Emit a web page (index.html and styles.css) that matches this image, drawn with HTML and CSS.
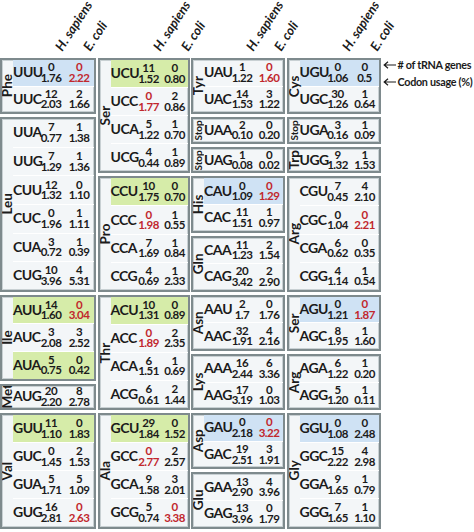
FILE: index.html
```html
<!DOCTYPE html>
<html>
<head>
<meta charset="utf-8">
<link rel="stylesheet" href="styles.css">
</head>
<body>
<div class="page">
  <div class="main">
    <div class="head">
      <div class="hcol"><span class="hs">H. sapiens</span><span class="ec">E. coli</span></div>
      <div class="hcol"><span class="hs">H. sapiens</span><span class="ec">E. coli</span></div>
      <div class="hcol"><span class="hs">H. sapiens</span><span class="ec">E. coli</span></div>
      <div class="hcol"><span class="hs">H. sapiens</span><span class="ec">E. coli</span></div>
    </div>
    <div class="table">
      <!-- column 1 -->
      <div class="box s2"><div class="aa">Phe</div><div class="rows">
        <div class="row blue"><span class="cod">UUU</span><span class="n"><span>0</span><span>1.76</span></span><span class="n r"><span>0</span><span>2.22</span></span></div>
        <div class="row"><span class="cod">UUC</span><span class="n"><span>12</span><span>2.03</span></span><span class="n"><span>2</span><span>1.66</span></span></div>
      </div></div>
      <div class="box s6"><div class="aa">Leu</div><div class="rows">
        <div class="row"><span class="cod">UUA</span><span class="n"><span>7</span><span>0.77</span></span><span class="n"><span>1</span><span>1.38</span></span></div>
        <div class="row"><span class="cod">UUG</span><span class="n"><span>7</span><span>1.29</span></span><span class="n"><span>1</span><span>1.36</span></span></div>
        <div class="row"><span class="cod">CUU</span><span class="n"><span>12</span><span>1.32</span></span><span class="n"><span>0</span><span>1.10</span></span></div>
        <div class="row"><span class="cod">CUC</span><span class="n"><span>0</span><span>1.96</span></span><span class="n"><span>1</span><span>1.11</span></span></div>
        <div class="row"><span class="cod">CUA</span><span class="n"><span>3</span><span>0.72</span></span><span class="n"><span>1</span><span>0.39</span></span></div>
        <div class="row"><span class="cod">CUG</span><span class="n"><span>10</span><span>3.96</span></span><span class="n"><span>4</span><span>5.31</span></span></div>
      </div></div>
      <div class="box s3"><div class="aa">Ile</div><div class="rows">
        <div class="row green"><span class="cod">AUU</span><span class="n"><span>14</span><span>1.60</span></span><span class="n r"><span>0</span><span>3.04</span></span></div>
        <div class="row"><span class="cod">AUC</span><span class="n"><span>3</span><span>2.08</span></span><span class="n"><span>3</span><span>2.52</span></span></div>
        <div class="row green"><span class="cod">AUA</span><span class="n"><span>5</span><span>0.75</span></span><span class="n"><span>0</span><span>0.42</span></span></div>
      </div></div>
      <div class="box s1"><div class="aa">Met</div><div class="rows">
        <div class="row"><span class="cod">AUG</span><span class="n"><span>20</span><span>2.20</span></span><span class="n"><span>8</span><span>2.78</span></span></div>
      </div></div>
      <div class="box s4"><div class="aa">Val</div><div class="rows">
        <div class="row green"><span class="cod">GUU</span><span class="n"><span>11</span><span>1.10</span></span><span class="n"><span>0</span><span>1.83</span></span></div>
        <div class="row"><span class="cod">GUC</span><span class="n"><span>0</span><span>1.45</span></span><span class="n"><span>2</span><span>1.53</span></span></div>
        <div class="row"><span class="cod">GUA</span><span class="n"><span>5</span><span>1.71</span></span><span class="n"><span>5</span><span>1.09</span></span></div>
        <div class="row"><span class="cod">GUG</span><span class="n"><span>16</span><span>2.81</span></span><span class="n r"><span>0</span><span>2.63</span></span></div>
      </div></div>

      <!-- column 2 -->
      <div class="box s4"><div class="aa">Ser</div><div class="rows">
        <div class="row green"><span class="cod">UCU</span><span class="n"><span>11</span><span>1.52</span></span><span class="n"><span>0</span><span>0.80</span></span></div>
        <div class="row"><span class="cod">UCC</span><span class="n r"><span>0</span><span>1.77</span></span><span class="n"><span>2</span><span>0.86</span></span></div>
        <div class="row"><span class="cod">UCA</span><span class="n"><span>5</span><span>1.22</span></span><span class="n"><span>1</span><span>0.70</span></span></div>
        <div class="row"><span class="cod">UCG</span><span class="n"><span>4</span><span>0.44</span></span><span class="n"><span>1</span><span>0.89</span></span></div>
      </div></div>
      <div class="box s4"><div class="aa">Pro</div><div class="rows">
        <div class="row green"><span class="cod">CCU</span><span class="n"><span>10</span><span>1.75</span></span><span class="n"><span>0</span><span>0.70</span></span></div>
        <div class="row"><span class="cod">CCC</span><span class="n r"><span>0</span><span>1.98</span></span><span class="n"><span>1</span><span>0.55</span></span></div>
        <div class="row"><span class="cod">CCA</span><span class="n"><span>7</span><span>1.69</span></span><span class="n"><span>1</span><span>0.84</span></span></div>
        <div class="row"><span class="cod">CCG</span><span class="n"><span>4</span><span>0.69</span></span><span class="n"><span>1</span><span>2.33</span></span></div>
      </div></div>
      <div class="box s4"><div class="aa">Thr</div><div class="rows">
        <div class="row green"><span class="cod">ACU</span><span class="n"><span>10</span><span>1.31</span></span><span class="n"><span>0</span><span>0.89</span></span></div>
        <div class="row"><span class="cod">ACC</span><span class="n r"><span>0</span><span>1.89</span></span><span class="n"><span>2</span><span>2.35</span></span></div>
        <div class="row"><span class="cod">ACA</span><span class="n"><span>6</span><span>1.51</span></span><span class="n"><span>1</span><span>0.69</span></span></div>
        <div class="row"><span class="cod">ACG</span><span class="n"><span>6</span><span>0.61</span></span><span class="n"><span>2</span><span>1.44</span></span></div>
      </div></div>
      <div class="box s4"><div class="aa">Ala</div><div class="rows">
        <div class="row green"><span class="cod">GCU</span><span class="n"><span>29</span><span>1.84</span></span><span class="n"><span>0</span><span>1.52</span></span></div>
        <div class="row"><span class="cod">GCC</span><span class="n r"><span>0</span><span>2.77</span></span><span class="n"><span>2</span><span>2.57</span></span></div>
        <div class="row"><span class="cod">GCA</span><span class="n"><span>9</span><span>1.58</span></span><span class="n"><span>3</span><span>2.01</span></span></div>
        <div class="row"><span class="cod">GCG</span><span class="n"><span>5</span><span>0.74</span></span><span class="n r"><span>0</span><span>3.38</span></span></div>
      </div></div>

      <!-- column 3 -->
      <div class="box s2"><div class="aa">Tyr</div><div class="rows">
        <div class="row"><span class="cod">UAU</span><span class="n"><span>1</span><span>1.22</span></span><span class="n r"><span>0</span><span>1.60</span></span></div>
        <div class="row"><span class="cod">UAC</span><span class="n"><span>14</span><span>1.53</span></span><span class="n"><span>3</span><span>1.22</span></span></div>
      </div></div>
      <div class="box s1"><div class="aa small">Stop</div><div class="rows">
        <div class="row"><span class="cod">UAA</span><span class="n"><span>2</span><span>0.10</span></span><span class="n"><span>0</span><span>0.20</span></span></div>
      </div></div>
      <div class="box s1"><div class="aa small">Stop</div><div class="rows">
        <div class="row"><span class="cod">UAG</span><span class="n"><span>1</span><span>0.08</span></span><span class="n"><span>0</span><span>0.02</span></span></div>
      </div></div>
      <div class="box s2"><div class="aa">His</div><div class="rows">
        <div class="row blue"><span class="cod">CAU</span><span class="n"><span>0</span><span>1.09</span></span><span class="n r"><span>0</span><span>1.29</span></span></div>
        <div class="row"><span class="cod">CAC</span><span class="n"><span>11</span><span>1.51</span></span><span class="n"><span>1</span><span>0.97</span></span></div>
      </div></div>
      <div class="box s2"><div class="aa">Gln</div><div class="rows">
        <div class="row"><span class="cod">CAA</span><span class="n"><span>11</span><span>1.23</span></span><span class="n"><span>2</span><span>1.54</span></span></div>
        <div class="row"><span class="cod">CAG</span><span class="n"><span>20</span><span>3.42</span></span><span class="n"><span>2</span><span>2.90</span></span></div>
      </div></div>
      <div class="box s2"><div class="aa">Asn</div><div class="rows">
        <div class="row"><span class="cod">AAU</span><span class="n"><span>2</span><span>1.7</span></span><span class="n"><span>0</span><span>1.76</span></span></div>
        <div class="row"><span class="cod">AAC</span><span class="n"><span>32</span><span>1.91</span></span><span class="n"><span>4</span><span>2.16</span></span></div>
      </div></div>
      <div class="box s2"><div class="aa">Lys</div><div class="rows">
        <div class="row"><span class="cod">AAA</span><span class="n"><span>16</span><span>2.44</span></span><span class="n"><span>6</span><span>3.36</span></span></div>
        <div class="row"><span class="cod">AAG</span><span class="n"><span>17</span><span>3.19</span></span><span class="n"><span>0</span><span>1.03</span></span></div>
      </div></div>
      <div class="box s2"><div class="aa">Asp</div><div class="rows">
        <div class="row blue"><span class="cod">GAU</span><span class="n"><span>0</span><span>2.18</span></span><span class="n r"><span>0</span><span>3.22</span></span></div>
        <div class="row"><span class="cod">GAC</span><span class="n"><span>19</span><span>2.51</span></span><span class="n"><span>3</span><span>1.91</span></span></div>
      </div></div>
      <div class="box s2"><div class="aa">Glu</div><div class="rows">
        <div class="row"><span class="cod">GAA</span><span class="n"><span>13</span><span>2.90</span></span><span class="n"><span>4</span><span>3.96</span></span></div>
        <div class="row"><span class="cod">GAG</span><span class="n"><span>13</span><span>3.96</span></span><span class="n"><span>0</span><span>1.79</span></span></div>
      </div></div>

      <!-- column 4 -->
      <div class="box s2"><div class="aa">Cys</div><div class="rows">
        <div class="row blue"><span class="cod">UGU</span><span class="n"><span>0</span><span>1.06</span></span><span class="n"><span>0</span><span>0.5</span></span></div>
        <div class="row"><span class="cod">UGC</span><span class="n"><span>30</span><span>1.26</span></span><span class="n"><span>1</span><span>0.64</span></span></div>
      </div></div>
      <div class="box s1"><div class="aa small">Stop</div><div class="rows">
        <div class="row"><span class="cod">UGA</span><span class="n"><span>3</span><span>0.16</span></span><span class="n"><span>1</span><span>0.09</span></span></div>
      </div></div>
      <div class="box s1"><div class="aa">Trp</div><div class="rows">
        <div class="row"><span class="cod">UGG</span><span class="n"><span>9</span><span>1.32</span></span><span class="n"><span>1</span><span>1.53</span></span></div>
      </div></div>
      <div class="box s4"><div class="aa">Arg</div><div class="rows">
        <div class="row"><span class="cod">CGU</span><span class="n"><span>7</span><span>0.45</span></span><span class="n"><span>4</span><span>2.10</span></span></div>
        <div class="row"><span class="cod">CGC</span><span class="n"><span>0</span><span>1.04</span></span><span class="n r"><span>0</span><span>2.21</span></span></div>
        <div class="row"><span class="cod">CGA</span><span class="n"><span>6</span><span>0.62</span></span><span class="n"><span>0</span><span>0.35</span></span></div>
        <div class="row"><span class="cod">CGG</span><span class="n"><span>4</span><span>1.14</span></span><span class="n"><span>1</span><span>0.54</span></span></div>
      </div></div>
      <div class="box s2"><div class="aa">Ser</div><div class="rows">
        <div class="row blue"><span class="cod">AGU</span><span class="n"><span>0</span><span>1.21</span></span><span class="n r"><span>0</span><span>1.87</span></span></div>
        <div class="row"><span class="cod">AGC</span><span class="n"><span>8</span><span>1.95</span></span><span class="n"><span>1</span><span>1.60</span></span></div>
      </div></div>
      <div class="box s2"><div class="aa">Arg</div><div class="rows">
        <div class="row"><span class="cod">AGA</span><span class="n"><span>6</span><span>1.22</span></span><span class="n"><span>1</span><span>0.20</span></span></div>
        <div class="row"><span class="cod">AGG</span><span class="n"><span>5</span><span>1.20</span></span><span class="n"><span>1</span><span>0.11</span></span></div>
      </div></div>
      <div class="box s4"><div class="aa">Gly</div><div class="rows">
        <div class="row blue"><span class="cod">GGU</span><span class="n"><span>0</span><span>1.08</span></span><span class="n"><span>0</span><span>2.48</span></span></div>
        <div class="row"><span class="cod">GGC</span><span class="n"><span>15</span><span>2.22</span></span><span class="n"><span>4</span><span>2.98</span></span></div>
        <div class="row"><span class="cod">GGA</span><span class="n"><span>9</span><span>1.65</span></span><span class="n"><span>1</span><span>0.79</span></span></div>
        <div class="row"><span class="cod">GGG</span><span class="n"><span>7</span><span>1.65</span></span><span class="n"><span>1</span><span>1.10</span></span></div>
      </div></div>
    </div>
  </div>
  <div class="notes">
    <div class="note"><svg class="arr" width="13" height="8" viewBox="0 0 13 8"><path d="M13 4H1.5M5 0.8L1.2 4L5 7.2" fill="none" stroke="#1b1b1b" stroke-width="1.2"/></svg><span># of tRNA genes</span></div>
    <div class="note"><svg class="arr" width="13" height="8" viewBox="0 0 13 8"><path d="M13 4H1.5M5 0.8L1.2 4L5 7.2" fill="none" stroke="#1b1b1b" stroke-width="1.2"/></svg><span>Codon usage (%)</span></div>
  </div>
</div>
</body>
</html>
```

FILE: styles.css
```css
html, body {
  margin: 0;
  padding: 0;
  background: #ffffff;
}
body {
  font-family: Lato, "Liberation Sans", sans-serif;
  color: #1b1b1b;
}
.page {
  display: flex;
  width: 474px;
  height: 532px;
  overflow: hidden;
}
.main {
  display: flex;
  flex-direction: column;
  flex: none;
}
.head {
  display: grid;
  grid-template-columns: 96px 92px 94px 94px;
  column-gap: 1.5px;
  height: 58px;
}
.hcol {
  display: flex;
  align-items: flex-end;
  padding: 0 0 5px 64px;
}
.hs, .ec {
  display: block;
  flex: none;
  width: 0;
  white-space: nowrap;
  font-style: italic;
  font-weight: 700;
  font-size: 13px;
  line-height: 14px;
  transform-origin: 0 100%;
  transform: rotate(-57deg);
}
.ec {
  margin-left: 28px;
}
.table {
  display: grid;
  grid-template-columns: 96px 92px 94px 94px;
  grid-template-rows: repeat(16, 29.6px);
  grid-auto-flow: column;
  column-gap: 1.5px;
}
.box {
  display: flex;
  margin-bottom: 3px;
  border: 2px solid #7e8a8d;
  box-shadow: inset 0 0 0 1px #c8d0d3;
  background: #f3f6f8;
  min-height: 0;
  overflow: hidden;
}
.s1 { grid-row: span 1; }
.s2 { grid-row: span 2; }
.s3 { grid-row: span 3; }
.s4 { grid-row: span 4; }
.s6 { grid-row: span 6; }
.aa {
  flex: none;
  width: 11px;
  writing-mode: vertical-rl;
  transform: rotate(180deg);
  text-align: center;
  font-size: 13.5px;
  font-weight: 700;
  line-height: 11px;
  white-space: nowrap;
}
.aa.small {
  font-size: 10px;
}
.rows {
  flex: 1;
  display: flex;
  flex-direction: column;
  min-width: 0;
}
.row {
  flex: 1;
  display: grid;
  grid-template-columns: 27px 22px minmax(0, 1fr);
  align-items: center;
  border-top: 1px solid #ffffff;
}
.row:first-child {
  border-top: 0;
}
.blue {
  background: #cfe2f4;
}
.green {
  background: #d6eca9;
}
.cod {
  font-size: 14px;
  font-weight: 700;
  white-space: nowrap;
  padding-bottom: 2px;
  letter-spacing: -0.5px;
}
.n {
  display: flex;
  flex-direction: column;
  align-items: center;
  font-size: 11.5px;
  font-weight: 700;
  line-height: 10.5px;
  letter-spacing: -0.5px;
  white-space: nowrap;
}
.n + .n {
  padding-left: 2px;
}
.r {
  color: #c1272d;
}
.notes {
  padding: 56px 0 0 2px;
  font-size: 10.8px;
  font-weight: 700;
  line-height: 17px;
  letter-spacing: -0.3px;
  white-space: nowrap;
}
.note {
  display: flex;
  align-items: center;
  gap: 2px;
}
.arr {
  flex: none;
}
```
